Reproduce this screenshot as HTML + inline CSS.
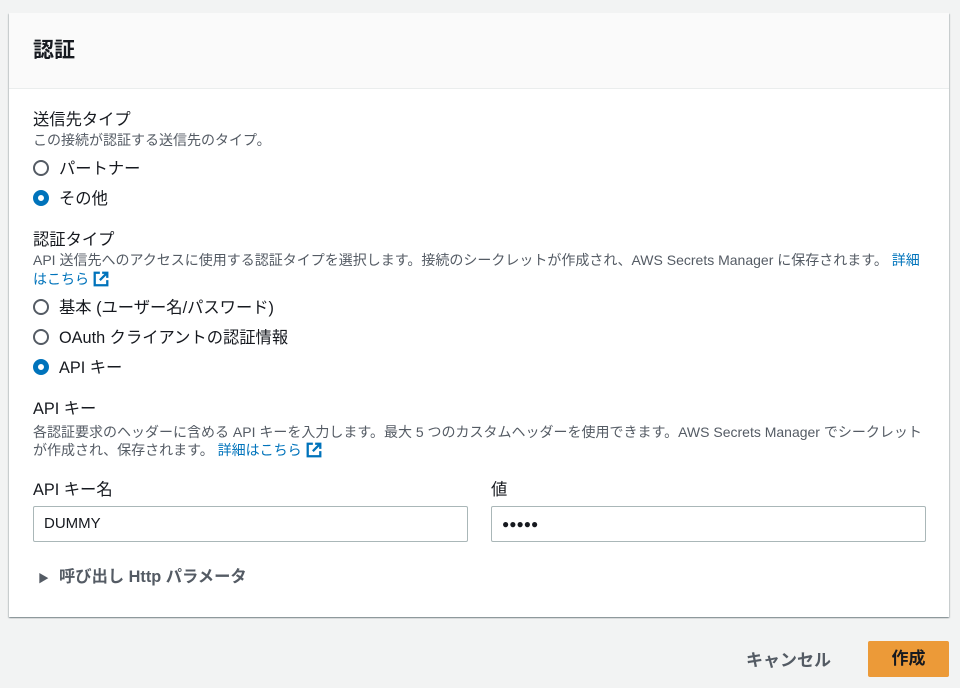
<!DOCTYPE html>
<html><head><meta charset="utf-8"><style>
body{margin:0;width:960px;height:688px;background:#f2f3f3;font-family:"Liberation Sans","Noto Sans CJK JP",sans-serif;color:#16191f;position:relative;overflow:hidden}
.card{position:absolute;left:9px;top:13px;width:940px;height:604px;background:#fff;box-shadow:0 1px 1px rgba(0,28,36,.3),1px 1px 1px rgba(0,28,36,.15),-1px 1px 1px rgba(0,28,36,.15)}
.hdr{height:75px;background:#fafafa;border-bottom:1px solid #eaeded}
.a{position:absolute;white-space:nowrap}
h2{position:absolute;left:24px;top:21px;margin:0;font-size:21px;font-weight:bold}
.lbl{font-size:16.3px}
.desc{font-size:14px;color:#545b64}
.r{width:16px;height:16px;border:2px solid #545b64;border-radius:50%;box-sizing:border-box}
.r.on{border:5px solid #0073bb}
.link{color:#0073bb}
.inp{position:absolute;height:36px;border:1px solid #aab7b8;border-radius:2px;box-sizing:border-box;font-size:15px;padding:8px 10px}
</style></head><body>
<div class="card"><div class="hdr"></div><h2>認証</h2></div>
<div class="a lbl" style="left:33px;top:106px">送信先タイプ</div>
<div class="a desc" style="left:33px;top:130px">この接続が認証する送信先のタイプ。</div>
<div class="a r" style="left:33px;top:160px"></div><div class="a lbl" style="left:59px;top:155px">パートナー</div>
<div class="a r on" style="left:33px;top:190px"></div><div class="a lbl" style="left:59px;top:185px">その他</div>
<div class="a lbl" style="left:33px;top:226px">認証タイプ</div>
<div class="a desc" style="left:33px;top:250px">API 送信先へのアクセスに使用する認証タイプを選択します。接続のシークレットが作成され、AWS Secrets Manager に保存されます。 <span class="link">詳細</span></div>
<div class="a desc link" style="left:33px;top:269px">はこちら <span style="display:inline-block;width:16px;height:16px;vertical-align:-3px"><svg width="16" height="16" viewBox="0 0 14 14" fill="none" stroke="#0073bb" stroke-width="2"><path d="M6 1.5H1.5v11h11V8M8 1.5h4.5V6M12.5 1.5L6 8"/></svg></span></div>
<div class="a r" style="left:33px;top:299px"></div><div class="a lbl" style="left:59px;top:294px">基本 (ユーザー名/パスワード)</div>
<div class="a r" style="left:33px;top:329px"></div><div class="a lbl" style="left:59px;top:324px">OAuth クライアントの認証情報</div>
<div class="a r on" style="left:33px;top:359px"></div><div class="a lbl" style="left:59px;top:354px">API キー</div>
<div class="a lbl" style="left:33px;top:395px">API キー</div>
<div class="a desc" style="left:33px;top:422px">各認証要求のヘッダーに含める API キーを入力します。最大 5 つのカスタムヘッダーを使用できます。AWS Secrets Manager でシークレット</div>
<div class="a desc" style="left:33px;top:440px">が作成され、保存されます。 <span class="link">詳細はこちら <svg width="16" height="16" viewBox="0 0 14 14" fill="none" stroke="#0073bb" stroke-width="2" style="vertical-align:-3px"><path d="M6 1.5H1.5v11h11V8M8 1.5h4.5V6M12.5 1.5L6 8"/></svg></span></div>
<div class="a lbl" style="left:33px;top:476px">API キー名</div>
<div class="a lbl" style="left:491px;top:476px">値</div>
<div class="inp" style="left:33px;top:506px;width:435px">DUMMY</div>
<div class="inp" style="left:491px;top:506px;width:435px;font-size:12px;padding-top:10px">●●●●●</div>
<div class="a" style="left:38px;top:570px;font-size:11px;color:#545b64">▶</div>
<div class="a" style="left:59px;top:563px;font-size:16.3px;font-weight:bold;color:#545b64">呼び出し Http パラメータ</div>
<div class="a" style="left:746px;top:646px;font-size:17px;font-weight:bold;color:#545b64">キャンセル</div>
<div class="a" style="left:868px;top:641px;width:81px;height:36px;background:#ec9a38;border-radius:2px;font-size:17px;font-weight:bold;text-align:center;line-height:36px;color:#16191f">作成</div>
</body></html>
